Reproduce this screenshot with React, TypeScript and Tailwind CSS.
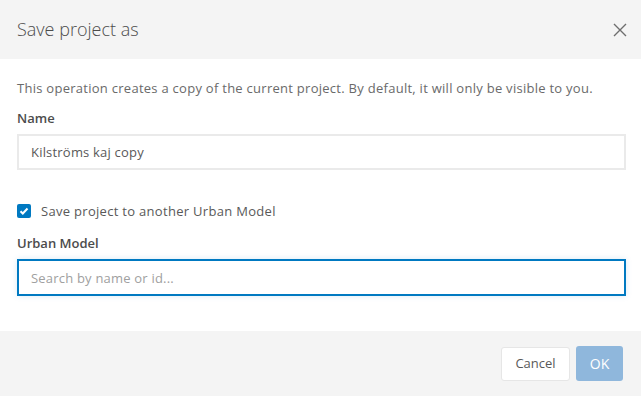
import { useState } from 'react'

export default function App() {
  const [checked, setChecked] = useState(true)
  const [name, setName] = useState('Kilströms kaj copy')
  const [query, setQuery] = useState('')

  return (
    <div className="flex h-[396px] w-[641px] flex-col bg-white font-['Open_Sans',sans-serif] text-[#4c4c4c]">
      <div className="flex h-[59px] shrink-0 items-center justify-between bg-[#f4f4f4] pl-[17px] pr-[14px]">
        <h2 className="text-[18px] font-light text-[#4c4c4c]">Save project as</h2>
        <button type="button" className="flex h-[14px] w-[14px] items-center justify-center text-[#6e6e6e]">
          <svg width="14" height="14" viewBox="0 0 14 14" fill="none" stroke="currentColor" strokeWidth="1.4">
            <path d="M1 1l12 12M13 1L1 13" />
          </svg>
        </button>
      </div>

      <div className="flex flex-1 flex-col px-[17px] pt-[20px]">
        <p className="text-[13px] leading-[18px] tracking-[0.27px] text-[#6a6a6a]">
          This operation creates a copy of the current project. By default, it will only be visible to you.
        </p>
        <label className="mt-[12px] text-[13px] font-semibold leading-[18px] text-[#4c4c4c]">Name</label>
        <input
          value={name}
          onChange={(e) => setName(e.target.value)}
          className="mt-[7px] h-[36px] w-[609px] border-2 border-[#eaeaea] px-[12px] text-[13px] tracking-[0.2px] text-[#595959] outline-none"
        />

        <label className="mt-[32px] flex items-center gap-[10px] text-[13px] leading-[18px] tracking-[0.3px] text-[#595959]">
          <span
            onClick={() => setChecked(!checked)}
            className={
              checked
                ? 'flex h-[14px] w-[14px] items-center justify-center rounded-[2px] bg-[#0079c1]'
                : 'flex h-[14px] w-[14px] items-center justify-center rounded-[2px] border border-[#959595] bg-white'
            }
          >
            {checked && (
              <svg width="10" height="10" viewBox="0 0 10 10" fill="none" stroke="white" strokeWidth="2">
                <path d="M1.5 5.2l2.3 2.3L8.5 2.5" />
              </svg>
            )}
          </span>
          Save project to another Urban Model
        </label>

        <label className="mt-[14px] text-[13px] font-semibold leading-[18px] text-[#4c4c4c]">Urban Model</label>
        <input
          value={query}
          onChange={(e) => setQuery(e.target.value)}
          placeholder="Search by name or id..."
          className="mt-[7px] h-[37px] w-[609px] border-2 border-[#0079c1] px-[12px] text-[13px] tracking-[0.2px] text-[#595959] shadow-[0_0_6px_rgba(0,121,193,0.15)] outline-none placeholder:text-[#a0a0a0]"
        />
      </div>

      <div className="flex h-[65px] shrink-0 items-center justify-end gap-[6px] bg-[#f4f4f4] pr-[18px]">
        <button
          type="button"
          className="h-[34px] w-[69px] rounded-[3px] border border-[#e6e6e6] bg-white text-[13px] text-[#595959]"
        >
          Cancel
        </button>
        <button
          type="button"
          disabled
          className="h-[35px] w-[47px] rounded-[3px] bg-[#8fb7dc] text-[14px] text-white"
        >
          OK
        </button>
      </div>
    </div>
  )
}
